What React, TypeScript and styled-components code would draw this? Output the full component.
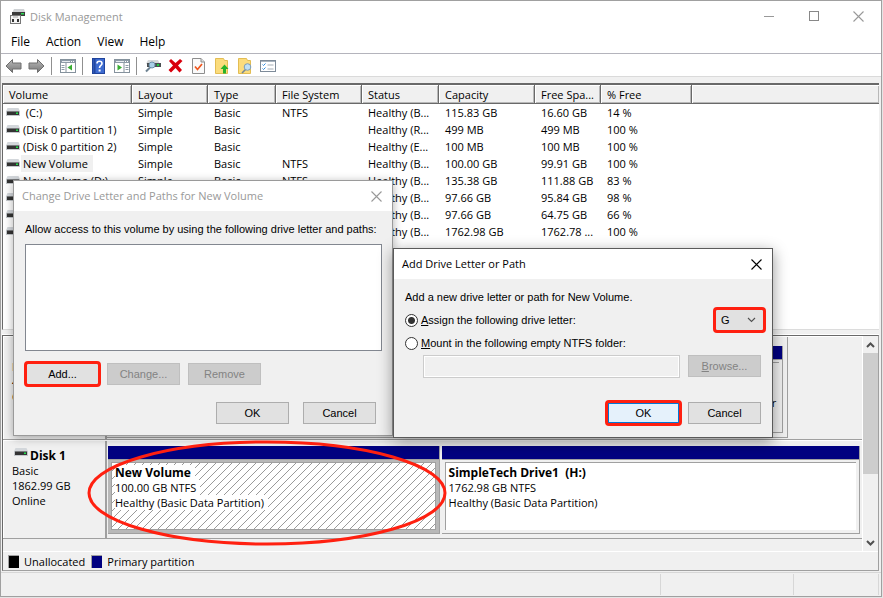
import React from "react";
import styled, { createGlobalStyle, css } from "styled-components";

const GlobalStyle = createGlobalStyle`
  * { box-sizing: border-box; }
  html, body { margin: 0; padding: 0; }
  body { background: #e4e4e4; }
  button, input, select { font: inherit; color: inherit; margin: 0; }
`;

const uiFont = '"Open Sans", "Noto Sans", sans-serif';
const dialogFont = '"Liberation Sans", Arial, sans-serif';
const line = "#a0a0a0";
const dark = "#696969";
const navy = "#000080";
const red = "#ff2010";

const Desktop = styled.div`
  position: relative;
  display: flex;
  min-height: 100vh;
  padding: 0 1px 1px 0;
  font-family: ${uiFont};
  font-size: 11px;
  line-height: 15px;
  color: #000;
`;

const Frame = styled.main`
  flex: 1;
  min-width: 0;
  display: flex;
  flex-direction: column;
  background: #f0f0f0;
  border: 1px solid ${line};
`;

const TitleBar = styled.header`
  display: flex;
  align-items: center;
  height: 30px;
  padding-left: 8px;
  background: #fff;
  color: #999;
`;

const AppTitle = styled.h1`
  flex: 1;
  margin: 0 0 0 4px;
  font-size: 11px;
  font-weight: 400;
`;

const CaptionButton = styled.button`
  display: flex;
  align-items: center;
  justify-content: center;
  width: 45px;
  height: 29px;
  padding: 0;
  border: 0;
  background: transparent;
`;

const MenuBar = styled.nav`
  display: flex;
  height: 23px;
  padding-left: 2px;
  background: #fff;
  border-bottom: 1px solid #b4b4bc;
`;

const MenuItem = styled.button`
  padding: 0 8px;
  border: 0;
  background: transparent;
  font-size: 12px;
  line-height: 20px;
`;

const ToolBar = styled.div`
  display: flex;
  align-items: center;
  height: 23px;
  padding: 1px 0 0 1px;
  background: #fff;
  border-bottom: 1px solid #dadada;
`;

const ToolButton = styled.button`
  display: flex;
  align-items: center;
  justify-content: center;
  width: 23px;
  height: 20px;
  padding: 0;
  border: 0;
  background: transparent;
`;

const ToolSeparator = styled.span`
  width: 8px;
  height: 18px;
  background: linear-gradient(#909090, #909090) 3px 0 / 1px 100% no-repeat;
`;

const Panes = styled.div`
  flex: 1;
  display: flex;
  flex-direction: column;
  padding: 6px 2px 1px 1px;
`;

const ListPane = styled.section`
  flex: 1;
  min-height: 120px;
  background: #fff;
  border-top: 2px solid ${dark};
  border-left: 1px solid ${dark};
  border-bottom: 1px solid #dcdcdc;
`;

const VolumeTable = styled.table`
  width: 100%;
  table-layout: fixed;
  border-collapse: separate;
  border-spacing: 0;
  white-space: nowrap;
`;

const Column = styled.col<{ $w?: number }>`
  width: ${(p) => (p.$w ? `${p.$w}px` : "auto")};
`;

const HeadCell = styled.th`
  height: 19px;
  padding: 0 0 0 6px;
  text-align: left;
  font-weight: 400;
  background: #f0f0f0;
  border-right: 1px solid ${dark};
  border-bottom: 1px solid ${dark};
  box-shadow: inset 1px 1px #fff, inset -1px -1px #b8b8b8;
  &:last-child { border-right: 0; }
`;

const Cell = styled.td`
  height: 17px;
  padding: 0 0 0 6px;
  line-height: 17px;
`;

const VolumeCell = styled(Cell)`
  padding-left: 3px;
`;

const VolumeName = styled.span`
  display: flex;
  align-items: center;
`;

const VolumeLabel = styled.span<{ $selected?: boolean }>`
  margin-left: 1px;
  padding: 0 5px 0 2px;
  white-space: pre;
  background: ${(p) => (p.$selected ? "#f0f0f0" : "transparent")};
`;

const Splitter = styled.div`
  height: 5px;
  border-bottom: 1px solid #fff;
`;

const GraphPane = styled.section`
  border: 1px solid ${line};
  border-top-color: ${dark};
  border-left-color: ${dark};
`;

const GraphBody = styled.div`
  display: flex;
  border-bottom: 1px solid #fff;
`;

const DiskList = styled.div`
  flex: 1;
  min-width: 0;
  padding-bottom: 12px;
  border-right: 1px solid #fff;
`;

const DiskRow = styled.div<{ $h: number }>`
  display: flex;
  height: ${(p) => p.$h}px;
  border-top: 1px solid #fff;
  border-bottom: 1px solid ${line};
`;

const DiskInfo = styled.div`
  flex: none;
  width: 104px;
  padding: 7px 0 0 8px;
  border-left: 1px solid #fff;
  border-right: 2px solid ${line};
`;

const DiskTitle = styled.div`
  display: flex;
  gap: 2px;
  padding-left: 2px;
  font-size: 12px;
  font-weight: 700;
`;

const Partitions = styled.div<{ $part?: boolean }>`
  display: flex;
  gap: 2px;
  padding: 5px 2px 4px 1px;
  min-width: 0;
  ${(p) =>
    p.$part
      ? css`
          width: calc(80% - 6px);
          margin-bottom: 1px;
          padding-right: 4px;
          padding-top: 9px;
          border-right: 1px solid ${line};
          border-bottom: 1px solid ${line};
        `
      : css`
          flex: 1;
        `}
`;

const Partition = styled.div<{ $grow: number; $selected?: boolean }>`
  flex: ${(p) => p.$grow} 1 0;
  min-width: 0;
  display: flex;
  flex-direction: column;
  border-right: 1px solid ${line};
  border-bottom: 1px solid ${line};
  background: ${(p) => (p.$selected ? "#b8b8b8" : "#f0f0f0")};
`;

const PartitionBar = styled.div`
  flex: none;
  height: 14px;
  background: ${navy};
  border-bottom: 1px solid ${line};
`;

const PartitionBox = styled.div<{ $selected?: boolean; $gray?: boolean; $end?: boolean }>`
  flex: 1;
  display: flex;
  flex-direction: column;
  align-items: ${(p) => (p.$end ? "flex-end" : "flex-start")};
  margin: 2px 3px 3px;
  padding: 2px ${(p) => (p.$end ? 3 : 2)}px 0 3px;
  border-top: 1px solid ${line};
  border-left: 1px solid ${line};
  overflow: hidden;
  white-space: pre;
  background: ${(p) => (p.$gray ? "#f0f0f0" : "#fff")};
  ${(p) =>
    p.$selected &&
    css`
      border-right: 1px solid ${line};
      border-bottom: 1px solid ${line};
      background: #fff
        linear-gradient(135deg, transparent 45%, #9a9a9a 46%, #9a9a9a 54%, transparent 55%)
        0 0 / 8px 8px;
    `}
`;

const PartitionText = styled.span<{ $bold?: boolean }>`
  padding-right: 4px;
  background: inherit;
  background-image: none;
  font-size: ${(p) => (p.$bold ? 12 : 11)}px;
  font-weight: ${(p) => (p.$bold ? 700 : 400)};
`;

const ScrollBar = styled.div`
  width: 15px;
  display: flex;
  flex-direction: column;
  background: #f0f0f0;
`;

const ScrollArrow = styled.button`
  display: flex;
  align-items: center;
  justify-content: center;
  height: 17px;
  padding: 0;
  border: 0;
  background: transparent;
`;

const ScrollTrack = styled.div`
  flex: 1;
`;

const ScrollThumb = styled.div`
  height: 67%;
  background: #cdcdcd;
`;

const Legend = styled.div`
  display: flex;
  align-items: center;
  gap: 5px;
  height: 18px;
  padding-left: 5px;
`;

const Swatch = styled.span<{ $color: string }>`
  width: 11px;
  height: 13px;
  background: ${(p) => p.$color};
  border-top: 1px solid ${line};
  border-left: 1px solid ${line};
`;

const LegendText = styled.span`
  font-size: 11px;
  padding-right: 1px;
`;

const StatusBar = styled.footer`
  display: flex;
  height: 24px;
  padding: 1px 2px 1px 0;
  border-top: 1px solid #d7d7d7;
`;

const StatusField = styled.div<{ $w?: number }>`
  flex: ${(p) => (p.$w ? `0 0 ${p.$w}px` : "1")};
  border-right: 1px solid #d7d7d7;
`;

/* Dialogs float over the main window. */
const Dialog = styled.section<{ $x: number; $y: number; $active?: boolean }>`
  position: absolute;
  left: ${(p) => p.$x}px;
  top: ${(p) => p.$y}px;
  width: 380px;
  background: #f0f0f0;
  border: 1px solid ${(p) => (p.$active ? "#5a5a5a" : "#9a9a9a")};
  box-shadow: ${(p) =>
    p.$active ? "0 4px 14px rgba(0,0,0,.42)" : "0 2px 9px rgba(0,0,0,.32)"};
  font-family: ${dialogFont};
  line-height: 16px;
`;

const DialogHeader = styled.header<{ $active?: boolean }>`
  display: flex;
  align-items: center;
  height: 30px;
  padding-left: 8px;
  background: #fff;
  font-family: ${uiFont};
  color: ${(p) => (p.$active ? "#000" : "#999")};
`;

const DialogTitle = styled.h2`
  flex: 1;
  margin: 0;
  font-size: 11px;
  font-weight: 400;
`;

const DialogClose = styled(CaptionButton)`
  width: 31px;
`;

const DialogBody = styled.div<{ $right: number; $bottom: number }>`
  display: flex;
  flex-direction: column;
  padding: 10px ${(p) => p.$right}px ${(p) => p.$bottom}px 11px;
`;

const PathList = styled.div`
  height: 107px;
  margin-top: 7px;
  background: #fff;
  border: 1px solid #828790;
`;

const ButtonRow = styled.div<{ $top: number; $end?: boolean; $gap: number; $pad?: number }>`
  display: flex;
  gap: ${(p) => p.$gap}px;
  margin-top: ${(p) => p.$top}px;
  justify-content: ${(p) => (p.$end ? "flex-end" : "flex-start")};
  padding: 0 ${(p) => p.$pad ?? 0}px 0 1px;
`;

const marked = css`
  outline: 3px solid ${red};
  outline-offset: -1px;
  border-radius: 2px;
`;

const PushButton = styled.button<{ $marked?: boolean; $default?: boolean }>`
  flex: none;
  width: 73px;
  height: 22px;
  padding: 0;
  background: ${(p) => (p.$default ? "#e5f1fb" : "#e1e1e1")};
  border: ${(p) => (p.$default ? "2px solid #0078d7" : "1px solid #adadad")};
  ${(p) => p.$marked && marked}
  &:disabled {
    background: #cccccc;
    border-color: #bfbfbf;
    color: #838383;
  }
`;

const OptionRow = styled.div<{ $h: number }>`
  display: flex;
  align-items: center;
  justify-content: space-between;
  height: ${(p) => p.$h}px;
  margin-top: 4px;
`;

const Option = styled.label`
  display: flex;
  align-items: center;
  gap: 3px;
`;

const Radio = styled.input`
  appearance: none;
  width: 13px;
  height: 13px;
  border: 1px solid #333;
  border-radius: 50%;
  background: #fff;
  &:checked {
    background: radial-gradient(circle, #333 0 3px, #fff 4px);
  }
`;

const LetterBox = styled.div`
  display: flex;
  align-items: center;
  width: 49px;
  height: 22px;
  padding-right: 7px;
  background: #e1e1e1;
  border: 1px solid #adadad;
  ${marked}
`;

const LetterSelect = styled.select`
  appearance: none;
  flex: 1;
  min-width: 0;
  height: 20px;
  padding: 0 0 0 5px;
  border: 0;
  background: transparent;
`;

const FolderRow = styled.div`
  display: flex;
  gap: 8px;
  margin-top: 4px;
  padding: 0 3px 0 18px;
`;

const FolderInput = styled.input`
  flex: 1;
  min-width: 0;
  height: 23px;
  border: 1px solid #cccccc;
  background: #f0f0f0;
  box-shadow: inset 0 0 0 1px #fff;
`;

/* Hand-drawn ring that marks the new volume. */
const Ring = styled.svg`
  position: absolute;
  left: 87px;
  top: 440px;
  pointer-events: none;
`;

const DriveIcon = () => (
  <svg width="14" height="9" viewBox="0 0 14 9" aria-hidden="true">
    <path d="M1.500 0h11L14 3.500H0z" fill="#d3d7db" />
    <rect y="3" width="14" height="5" fill="#c3c7cb" />
    <rect x="1" y="3.500" width="12" height="3.500" fill="#333" />
    <rect x="10" y="4.500" width="2" height="1.500" fill="#1fe04a" />
  </svg>
);

const AppIcon = () => (
  <svg width="17" height="17" viewBox="0 0 17 17" aria-hidden="true">
    <path d="M5 1h10l1.500 4H3z" fill="#cfd2d5" />
    <rect x="3" y="4" width="13" height="4" fill="#3a3a3a" />
    <rect x="12" y="5" width="3" height="1.500" fill="#28d850" />
    <rect x="1" y="7" width="11" height="9" fill="#777" />
    <rect x="2" y="8" width="9" height="7" fill="#f4f4f4" />
    <rect x="3" y="11" width="2" height="3" fill="#333" />
    <rect x="8" y="11" width="2" height="3" fill="#333" />
    <path d="M4 9h5" stroke="#aaa" />
  </svg>
);

const Cross = ({ size = 11, color = "#999" }: { size?: number; color?: string }) => (
  <svg width={size} height={size} viewBox="0 0 11 11" aria-hidden="true">
    <path d="M.5.5l10 10M10.500.5l-10 10" stroke={color} strokeWidth="1.1" />
  </svg>
);

const Arrow = ({ flip }: { flip?: boolean }) => (
  <svg width="17" height="16" viewBox="0 0 17 16" aria-hidden="true">
    <defs>
      <linearGradient id="steel" x1="0" y1="0" x2="0" y2="1">
        <stop offset="0" stopColor="#b9b9b9" />
        <stop offset="1" stopColor="#777" />
      </linearGradient>
    </defs>
    <path
      d={flip ? "M16 8L9.500 1.500V5H1v6h8.500v3.500z" : "M1 8l6.500-6.500V5H16v6H7.500v3.500z"}
      fill="url(#steel)"
      stroke="#6e6e6e"
    />
  </svg>
);

const PanelIcon = ({ right }: { right?: boolean }) => (
  <svg width="16" height="14" viewBox="0 0 16 14" aria-hidden="true">
    <rect x=".5" y=".5" width="15" height="13" fill="#fff" stroke="#85929d" />
    <rect x="1" y="1" width="14" height="3" fill="#8d9ba8" />
    <path d="M2 2.500h8" stroke="#e6ebef" />
    <path d="M11 2.500h1M13 2.500h1" stroke="#fff" />
    {right ? (
      <>
        <path d="M10 4v9" stroke="#85929d" />
        <path d="M11.500 6.500h3M11.500 8.500h3M11.500 10.500h3" stroke="#8d9ba8" />
        <path d="M3.500 5.500v6L8 8.500z" fill="#38ad32" />
      </>
    ) : (
      <>
        <path d="M6 4v9" stroke="#85929d" />
        <path d="M1.500 6.500h3M1.500 8.500h3M1.500 10.500h3" stroke="#8d9ba8" />
        <path d="M12 5.500v6L7.500 8.500z" fill="#38ad32" />
      </>
    )}
  </svg>
);

const HelpIcon = () => (
  <svg width="13" height="16" viewBox="0 0 13 16" aria-hidden="true">
    <rect x=".5" y=".5" width="12" height="15" fill="#3d6bd0" stroke="#20449c" />
    <path d="M2.500 1v14" stroke="#23479f" strokeWidth="2" />
    <path d="M5 5.500C5 2.500 10 2.500 10 5.500c0 2-2.500 2-2.500 4.500" fill="none" stroke="#fff" strokeWidth="1.600" />
    <rect x="6.600" y="11.500" width="2" height="2" fill="#fff" />
  </svg>
);

const RescanIcon = () => (
  <svg width="16" height="15" viewBox="0 0 16 15" aria-hidden="true">
    <path d="M3 2h10l2 4H1z" fill="#d5d8da" />
    <rect x="2" y="5" width="14" height="4" fill="#4a4f52" />
    <rect x="12" y="6" width="2" height="2" fill="#20d040" />
    <path d="M1 13.500l4-4" stroke="#6d8291" strokeWidth="2" />
    <circle cx="7" cy="7" r="3" fill="#a9cfe8" stroke="#6b8fa8" />
  </svg>
);

const DeleteIcon = () => (
  <svg width="15" height="15" viewBox="0 0 15 15" aria-hidden="true">
    <path d="M3 1l4.500 4L12 1l2.500 2-4.500 4.500 4 4.500-2.500 2.500-4-4.500-4.500 4.500L.5 12l4.500-4.500L1 3z" fill="#d9000d" />
  </svg>
);

const CheckDocIcon = () => (
  <svg width="13" height="16" viewBox="0 0 13 16" aria-hidden="true">
    <path d="M.5.5h8.500l3.500 3.500v11.500H.5z" fill="#fafafa" stroke="#8e8e8e" />
    <path d="M9 .5V4h3.500" fill="#ddd" stroke="#8e8e8e" />
    <path d="M3 8.500l2.500 3L10 6" fill="none" stroke="#f0561d" strokeWidth="1.700" />
  </svg>
);

const FolderIcon = ({ search }: { search?: boolean }) => (
  <svg width="14" height="16" viewBox="0 0 14 16" aria-hidden="true">
    <path d="M.5.5h8l1 2h3v13H.5z" fill="#fbdc7c" stroke="#e3bd53" />
    {search ? (
      <>
        <path d="M4 15l3.500-3.500" stroke="#748796" strokeWidth="1.600" />
        <circle cx="9.500" cy="9" r="3.300" fill="#bfe0f5" stroke="#7d9db5" />
      </>
    ) : (
      <path d="M9.500 6.500l4 4.500h-2.500v4.500H8V11H5.500z" fill="#27b32b" />
    )}
  </svg>
);

const ListIcon = () => (
  <svg width="16" height="12" viewBox="0 0 16 12" aria-hidden="true">
    <rect x=".5" y=".5" width="15" height="11" fill="#fff" stroke="#7e8b99" />
    <path d="M1 1.500h14" stroke="#a9b4bf" />
    <path d="M2.500 4.500l1 1 2-2M2.500 8.500l1 1 2-2" fill="none" stroke="#2a8ae0" />
    <path d="M7.500 5h6M7.500 9h6" stroke="#a5adb5" />
  </svg>
);

const Chevron = ({ up, thin }: { up?: boolean; thin?: boolean }) => (
  <svg width="9" height="6" viewBox="0 0 9 6" aria-hidden="true">
    <path
      d={up ? "M1 5l3.500-3.500L8 5" : "M1 1l3.500 3.500L8 1"}
      fill="none"
      stroke="#505050"
      strokeWidth={thin ? 1.1 : 2}
    />
  </svg>
);

const columns: { name: string; w?: number }[] = [
  { name: "Volume", w: 129 },
  { name: "Layout", w: 76 },
  { name: "Type", w: 68 },
  { name: "File System", w: 86 },
  { name: "Status", w: 77 },
  { name: "Capacity", w: 96 },
  { name: "Free Spa...", w: 66 },
  { name: "% Free", w: 91 },
  { name: "" },
];

const volumes = [
  [" (C:)", "NTFS", "Healthy (B...", "115.83 GB", "16.60 GB", "14 %"],
  ["(Disk 0 partition 1)", "", "Healthy (R...", "499 MB", "499 MB", "100 %"],
  ["(Disk 0 partition 2)", "", "Healthy (E...", "100 MB", "100 MB", "100 %"],
  ["New Volume", "NTFS", "Healthy (B...", "100.00 GB", "99.91 GB", "100 %"],
  ["New Volume (D:)", "NTFS", "Healthy (B...", "135.38 GB", "111.88 GB", "83 %"],
  ["New Volume (E:)", "NTFS", "Healthy (B...", "97.66 GB", "95.84 GB", "98 %"],
  ["New Volume (F:)", "NTFS", "Healthy (B...", "97.66 GB", "64.75 GB", "66 %"],
  ["SimpleTech Drive1", "NTFS", "Healthy (B...", "1762.98 GB", "1762.78 ...", "100 %"],
];

const tools: [string, React.ReactNode][][] = [
  [["Back", <Arrow />], ["Forward", <Arrow flip />]],
  [["Show console tree", <PanelIcon />]],
  [["Help", <HelpIcon />], ["Show action pane", <PanelIcon right />]],
  [
    ["Rescan disks", <RescanIcon />],
    ["Delete", <DeleteIcon />],
    ["Properties", <CheckDocIcon />],
    ["Open", <FolderIcon />],
    ["Explore", <FolderIcon search />],
    ["View settings", <ListIcon />],
  ],
];

function DiskLabel({ name, size }: { name: string; size: string }) {
  return (
    <DiskInfo>
      <DiskTitle>
        <DriveIcon />
        {name}
      </DiskTitle>
      <div>Basic</div>
      <div>{size}</div>
      <div>Online</div>
    </DiskInfo>
  );
}

export default function App() {
  return (
    <Desktop>
      <GlobalStyle />
      <Frame>
        <TitleBar>
          <AppIcon />
          <AppTitle>Disk Management</AppTitle>
          <CaptionButton aria-label="Minimize">
            <svg width="10" height="1" viewBox="0 0 10 1"><rect width="10" height="1" fill="#999" /></svg>
          </CaptionButton>
          <CaptionButton aria-label="Maximize">
            <svg width="10" height="10" viewBox="0 0 10 10"><rect x=".5" y=".5" width="9" height="9" fill="none" stroke="#888" /></svg>
          </CaptionButton>
          <CaptionButton aria-label="Close"><Cross /></CaptionButton>
        </TitleBar>
        <MenuBar>
          {["File", "Action", "View", "Help"].map((m) => (
            <MenuItem key={m}>{m}</MenuItem>
          ))}
        </MenuBar>
        <ToolBar role="toolbar">
          {tools.map((group, i) => (
            <React.Fragment key={i}>
              {i > 0 && <ToolSeparator />}
              {group.map(([name, icon]) => (
                <ToolButton key={name} aria-label={name}>{icon}</ToolButton>
              ))}
            </React.Fragment>
          ))}
        </ToolBar>

        <Panes>
          <ListPane>
            <VolumeTable>
              <colgroup>
                {columns.map((c) => <Column key={c.name} $w={c.w} />)}
              </colgroup>
              <thead>
                <tr>{columns.map((c) => <HeadCell key={c.name}>{c.name}</HeadCell>)}</tr>
              </thead>
              <tbody>
                {volumes.map(([name, fs, ...rest]) => (
                  <tr key={name}>
                    <VolumeCell>
                      <VolumeName>
                        <DriveIcon />
                        <VolumeLabel $selected={name === "New Volume"}>{name}</VolumeLabel>
                      </VolumeName>
                    </VolumeCell>
                    <Cell>Simple</Cell>
                    <Cell>Basic</Cell>
                    <Cell>{fs}</Cell>
                    {rest.map((v, i) => <Cell key={i}>{v}</Cell>)}
                    <Cell />
                  </tr>
                ))}
              </tbody>
            </VolumeTable>
          </ListPane>
          <Splitter />
          <GraphPane>
            <GraphBody>
              <DiskList>
                <DiskRow $h={104}>
                  <DiskLabel name="Disk 0" size="465.76 GB" />
                  <Partitions $part>
                    <Partition $grow={276}>
                      <PartitionBar />
                      <PartitionBox $gray />
                    </Partition>
                    <Partition $grow={300}>
                      <PartitionBar />
                      <PartitionBox $gray />
                    </Partition>
                    <Partition $grow={96}>
                      <PartitionBar />
                      <PartitionBox $gray $end>
                        <PartitionText $bold> </PartitionText>
                        <PartitionText> </PartitionText>
                        <span>Healthy (Pr</span>
                      </PartitionBox>
                    </Partition>
                  </Partitions>
                </DiskRow>
                <DiskRow $h={99}>
                  <DiskLabel name="Disk 1" size="1862.99 GB" />
                  <Partitions>
                    <Partition $grow={331} $selected>
                      <PartitionBar />
                      <PartitionBox $selected>
                        <PartitionText $bold>New Volume</PartitionText>
                        <PartitionText>100.00 GB NTFS</PartitionText>
                        <PartitionText>Healthy (Basic Data Partition)</PartitionText>
                      </PartitionBox>
                    </Partition>
                    <Partition $grow={418}>
                      <PartitionBar />
                      <PartitionBox>
                        <PartitionText $bold>{"SimpleTech Drive1  (H:)"}</PartitionText>
                        <PartitionText>1762.98 GB NTFS</PartitionText>
                        <PartitionText>Healthy (Basic Data Partition)</PartitionText>
                      </PartitionBox>
                    </Partition>
                  </Partitions>
                </DiskRow>
              </DiskList>
              <ScrollBar>
                <ScrollArrow aria-label="Scroll up"><Chevron up /></ScrollArrow>
                <ScrollTrack><ScrollThumb /></ScrollTrack>
                <ScrollArrow aria-label="Scroll down"><Chevron /></ScrollArrow>
              </ScrollBar>
            </GraphBody>
            <Legend>
              <Swatch $color="#000" />
              <LegendText>Unallocated</LegendText>
              <Swatch $color={navy} />
              <LegendText>Primary partition</LegendText>
            </Legend>
          </GraphPane>
        </Panes>
        <StatusBar>
          <StatusField />
          <StatusField $w={133} />
          <StatusField $w={85} />
        </StatusBar>
      </Frame>

      <Dialog $x={13} $y={180} role="dialog" aria-label="Change Drive Letter and Paths for New Volume">
        <DialogHeader>
          <DialogTitle>Change Drive Letter and Paths for New Volume</DialogTitle>
          <DialogClose aria-label="Close"><Cross /></DialogClose>
        </DialogHeader>
        <DialogBody $right={10} $bottom={11}>
          <div>Allow access to this volume by using the following drive letter and paths:</div>
          <PathList />
          <ButtonRow $top={12} $gap={8}>
            <PushButton $marked>Add...</PushButton>
            <PushButton disabled>Change...</PushButton>
            <PushButton disabled>Remove</PushButton>
          </ButtonRow>
          <ButtonRow $top={17} $gap={14} $pad={6} $end>
            <PushButton>OK</PushButton>
            <PushButton>Cancel</PushButton>
          </ButtonRow>
        </DialogBody>
      </Dialog>

      <Dialog $x={393} $y={248} $active role="dialog" aria-label="Add Drive Letter or Path">
        <DialogHeader $active>
          <DialogTitle>Add Drive Letter or Path</DialogTitle>
          <DialogClose aria-label="Close"><Cross color="#000" /></DialogClose>
        </DialogHeader>
        <DialogBody $right={8} $bottom={13}>
          <div>Add a new drive letter or path for New Volume.</div>
          <OptionRow $h={22}>
            <Option>
              <Radio type="radio" name="mode" defaultChecked />
              <span><u>A</u>ssign the following drive letter:</span>
            </Option>
            <LetterBox>
              <LetterSelect aria-label="Drive letter" defaultValue="G">
                <option>G</option>
              </LetterSelect>
              <Chevron thin />
            </LetterBox>
          </OptionRow>
          <OptionRow $h={16}>
            <Option>
              <Radio type="radio" name="mode" />
              <span><u>M</u>ount in the following empty NTFS folder:</span>
            </Option>
          </OptionRow>
          <FolderRow>
            <FolderInput aria-label="NTFS folder" disabled />
            <PushButton disabled><u>B</u>rowse...</PushButton>
          </FolderRow>
          <ButtonRow $top={24} $gap={8} $pad={3} $end>
            <PushButton $marked $default>OK</PushButton>
            <PushButton>Cancel</PushButton>
          </ButtonRow>
        </DialogBody>
      </Dialog>

      <Ring width="360" height="106" viewBox="0 0 360 106" aria-hidden="true">
        <ellipse cx="180" cy="53" rx="178" ry="51" fill="none" stroke={red} strokeWidth="3" />
      </Ring>
    </Desktop>
  );
}
